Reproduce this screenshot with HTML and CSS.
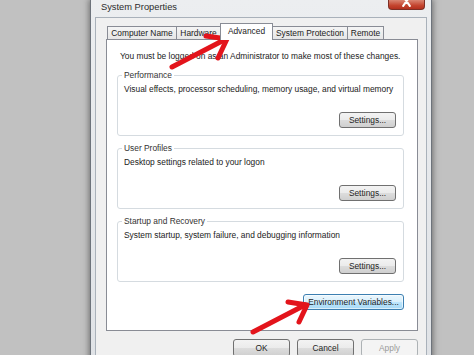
FILE: index.html
```html
<!DOCTYPE html>
<html lang="en">
<head>
    <meta charset="UTF-8">
    <meta name="viewport" content="width=device-width, initial-scale=1.0">
    <title>System Properties</title>
    <link rel="stylesheet" href="styles.css">
</head>
<body>
    <div class="screen">
        <div class="window">
            <div class="titlebar">
                <span class="title">System Properties</span>
                <span class="close-btn">
                    <svg width="37" height="10" viewBox="0 0 37 10">
                        <path d="M15 -4 L22 6 M22 -4 L15 6" stroke="#fff" stroke-width="2.2" stroke-linecap="round"/>
                    </svg>
                </span>
            </div>
            <div class="client">
                <div class="tabs">
                    <div class="tab tab-computer">Computer Name</div>
                    <div class="tab tab-hardware">Hardware</div>
                    <div class="tab tab-active">Advanced</div>
                    <div class="tab tab-protection">System Protection</div>
                    <div class="tab tab-remote">Remote</div>
                </div>
                <div class="panel">
                    <p class="intro">You must be logged on as an Administrator to make most of these changes.</p>
                    <div class="groups">
                        <div class="group">
                            <span class="group-title">Performance</span>
                            <span class="group-desc">Visual effects, processor scheduling, memory usage, and virtual memory</span>
                            <button class="btn btn-settings">Settings...</button>
                        </div>
                        <div class="group">
                            <span class="group-title">User Profiles</span>
                            <span class="group-desc">Desktop settings related to your logon</span>
                            <button class="btn btn-settings">Settings...</button>
                        </div>
                        <div class="group">
                            <span class="group-title">Startup and Recovery</span>
                            <span class="group-desc">System startup, system failure, and debugging information</span>
                            <button class="btn btn-settings">Settings...</button>
                        </div>
                    </div>
                    <button class="btn btn-env">Environment Variables...</button>
                </div>
                <div class="actions">
                    <button class="btn btn-action">OK</button>
                    <button class="btn btn-action">Cancel</button>
                    <button class="btn btn-action btn-disabled">Apply</button>
                </div>
            </div>
        </div>

        <!-- red pointer arrows drawn over the screenshot -->
        <svg class="arrows" width="474" height="355" viewBox="0 0 474 355">
            <g fill="none" stroke="#e3141b" stroke-width="5" stroke-linecap="round" stroke-linejoin="round">
                <path d="M172 67 L226 39"/>
                <path d="M206 36 L227 39 L218 58"/>
                <path d="M253 332 L305 305"/>
                <path d="M288 302 L307 305 L299 322"/>
            </g>
        </svg>
    </div>
</body>
</html>
```

FILE: styles.css
```css
* {
    box-sizing: border-box;
}
body {
    margin: 0;
    font-family: "Liberation Sans", Arial, sans-serif;
}
.screen {
    position: relative;
    width: 474px;
    height: 355px;
    overflow: hidden;
    background-color: #c1c1c1;
    padding-left: 90px;
}
.window {
    width: 342px;
    height: 372px;
    padding: 0 4px;
    border: 1px solid #6d737b;
    border-top: none;
    background: linear-gradient(#eceef0, #dfe2e6);
    box-shadow: 0 0 6px 1px rgba(30,30,30,0.5);
}
.titlebar {
    height: 17px;
    display: flex;
    justify-content: space-between;
    align-items: flex-start;
}
.title {
    font-size: 9.3px;
    line-height: 12px;
    color: #2b2b2b;
    padding: 1px 0 0 6px;
}
.close-btn {
    display: flex;
    width: 37px;
    height: 10px;
    margin-right: 2px;
    border: 1px solid #7c2f25;
    border-top: none;
    border-radius: 0 0 4px 4px;
    background: linear-gradient(#d98572, #c4452f 60%, #b3301e);
    overflow: hidden;
}
.client {
    height: 352px;
    padding: 5px 8px 0 10px;
    border: 1px solid #a9b1ba;
    background-color: #f0f0f0;
}
.tabs {
    display: flex;
    align-items: flex-end;
    height: 16px;
}
.tab {
    height: 13px;
    margin-left: -1px;
    border: 1px solid #898c95;
    border-bottom: none;
    background: linear-gradient(#f5f5f5, #e6e6e6);
    font-size: 8.4px;
    line-height: 13px;
    text-align: center;
    color: #222;
    white-space: nowrap;
}
.tab-computer {
    width: 70px;
    margin-left: 1px;
}
.tab-hardware {
    width: 45px;
}
.tab-active {
    position: relative;
    z-index: 1;
    width: 53px;
    height: 17px;
    margin-bottom: -1px;
    background: #fff;
    line-height: 14px;
}
.tab-protection {
    width: 76px;
}
.tab-remote {
    width: 37px;
}
.panel {
    height: 292px;
    padding: 0 13px 0 10px;
    border: 1px solid #898c95;
    background-color: #fff;
}
.intro {
    margin: 11px 0 0 3px;
    font-size: 8.4px;
    line-height: 11px;
    color: #222;
    white-space: nowrap;
}
.groups {
    display: flex;
    flex-direction: column;
    gap: 12px;
    margin-top: 13px;
}
.group {
    display: flex;
    flex-direction: column;
    padding-bottom: 7px;
    border: 1px solid #d5dbe0;
    border-radius: 3px;
    font-size: 8.4px;
    line-height: 11px;
    color: #222;
}
.group-title {
    align-self: flex-start;
    margin: -6px 0 0 4px;
    padding: 0 2px;
    background-color: #fff;
    color: #333;
}
.group-desc {
    margin: 3px 0 0 6px;
    white-space: nowrap;
}
.btn {
    height: 16px;
    padding: 0;
    border: 1px solid #707070;
    border-radius: 3px;
    background: linear-gradient(#f3f3f3, #ebebeb 50%, #dddddd 50%, #cfcfcf);
    font-family: inherit;
    font-size: 8.4px;
    color: #1e1e1e;
    white-space: nowrap;
}
.btn-settings {
    align-self: flex-end;
    width: 57px;
    margin: 17px 7px 0 0;
}
.btn-env {
    display: block;
    width: 101px;
    margin: 12px 0 0 auto;
    border-color: #3c7fb1;
    background: linear-gradient(#eaf6fd, #d9f0fc 50%, #bee6fd 50%, #a7d9f5);
    box-shadow: inset 0 0 0 1px rgba(255,255,255,0.6);
}
.actions {
    display: flex;
    justify-content: flex-end;
    gap: 7px;
    margin-top: 8px;
}
.btn-action {
    width: 57px;
    height: 18px;
}
.btn-disabled {
    border-color: #adb2b5;
    background: #f4f4f4;
    color: #9a9a9a;
}
.arrows {
    position: absolute;
    top: 0;
    left: 0;
    pointer-events: none;
}
```
